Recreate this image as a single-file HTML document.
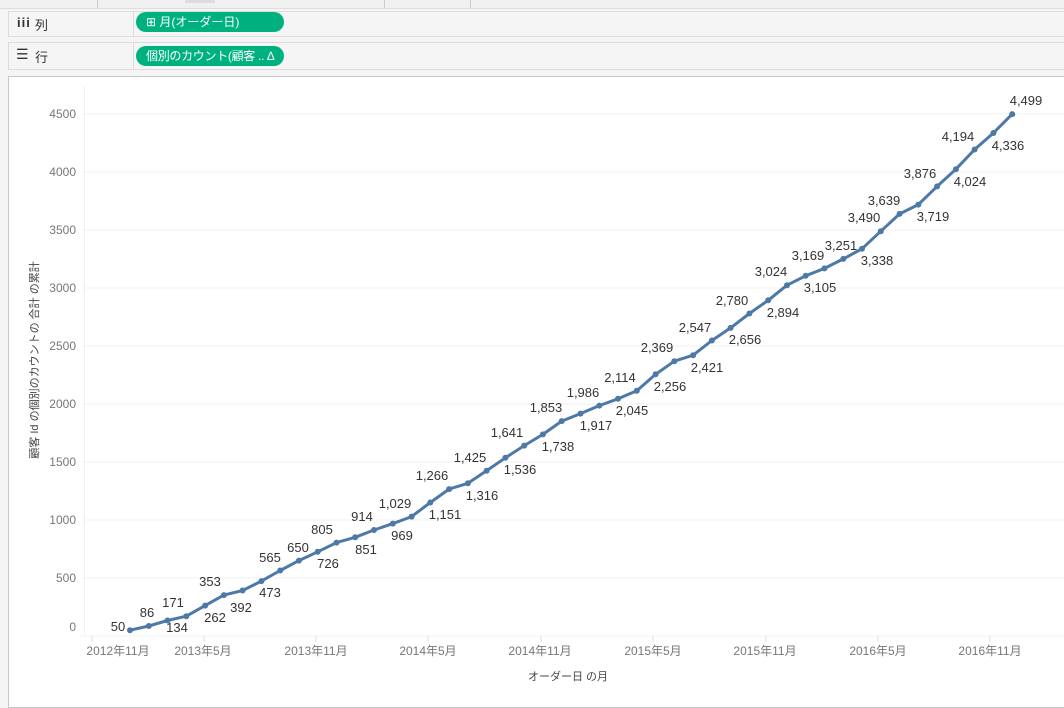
<!DOCTYPE html>
<html><head><meta charset="utf-8"><style>
body{margin:0;width:1064px;height:699px;background:#f5f5f5;overflow:hidden;position:relative;font-family:"Liberation Sans","Noto Sans CJK JP",sans-serif}
.row{position:absolute;left:8px;right:0;background:#f5f5f5;border:1px solid #dcdcdc;border-right:none}
.lab{position:absolute;left:0;top:0;bottom:0;width:124px;border-right:1px solid #dcdcdc;font-size:13px;color:#333}
.pill{position:absolute;left:136px;height:20px;width:148px;border-radius:10px;background:#00b180;color:#fff;font-size:12px;line-height:20px;white-space:nowrap;overflow:hidden}
</style></head><body>
<div style="position:absolute;left:0;top:0;width:1064px;height:8px;background:#f0f0f0;border-bottom:1px solid #ddd"></div>
<div style="position:absolute;left:97px;top:0;width:1px;height:8px;background:#ccc"></div>
<div style="position:absolute;left:185px;top:0;width:30px;height:3px;background:#ddd"></div>
<div style="position:absolute;left:384px;top:0;width:1px;height:8px;background:#ccc"></div>
<div style="position:absolute;left:470px;top:0;width:1px;height:8px;background:#ccc"></div>
<div class="row" style="top:11px;height:24px"><div class="lab"><span style="position:absolute;left:8px;top:3px;font-weight:bold;letter-spacing:1px">iii</span><span style="position:absolute;left:26px;top:3px">列</span></div></div>
<div class="pill" style="top:12px"><span style="margin-left:10px">⊞ 月(オーダー日)</span></div>
<div class="row" style="top:42px;height:26px"><div class="lab"><span style="position:absolute;left:7px;top:3px;font-size:14px">☰</span><span style="position:absolute;left:26px;top:4px">行</span></div></div>
<div class="pill" style="top:46px"><span style="margin-left:10px;letter-spacing:-0.3px">個別のカウント(顧客 .. ∆</span></div>
<div style="position:absolute;left:8px;top:76px;width:1060px;height:630px;background:#fff;border:1px solid #c8c8c8"></div>
<svg width="1064" height="699" style="position:absolute;left:0;top:0" font-family="Liberation Sans, Noto Sans CJK JP, sans-serif">
<g stroke="#f0f0f0" stroke-width="1">
<line x1="84" y1="114" x2="1064" y2="114"/><line x1="84" y1="172" x2="1064" y2="172"/><line x1="84" y1="230" x2="1064" y2="230"/><line x1="84" y1="288" x2="1064" y2="288"/><line x1="84" y1="346" x2="1064" y2="346"/><line x1="84" y1="404" x2="1064" y2="404"/><line x1="84" y1="462" x2="1064" y2="462"/><line x1="84" y1="520" x2="1064" y2="520"/><line x1="84" y1="578" x2="1064" y2="578"/><line x1="80" y1="636" x2="1064" y2="636"/>
<line x1="84.5" y1="86" x2="84.5" y2="636"/>
</g>
<g stroke="#ddd"><line x1="92" y1="636" x2="92" y2="642"/><line x1="204" y1="636" x2="204" y2="642"/><line x1="316" y1="636" x2="316" y2="642"/><line x1="428" y1="636" x2="428" y2="642"/><line x1="541" y1="636" x2="541" y2="642"/><line x1="653" y1="636" x2="653" y2="642"/><line x1="766" y1="636" x2="766" y2="642"/><line x1="878" y1="636" x2="878" y2="642"/><line x1="990" y1="636" x2="990" y2="642"/></g>
<g font-size="12" fill="#777" text-anchor="end">
<text x="76" y="118">4500</text><text x="76" y="176">4000</text><text x="76" y="234">3500</text><text x="76" y="292">3000</text><text x="76" y="350">2500</text><text x="76" y="408">2000</text><text x="76" y="466">1500</text><text x="76" y="524">1000</text><text x="76" y="582">500</text><text x="76" y="631">0</text>
</g>
<g font-size="12" fill="#777" text-anchor="middle">
<text x="118" y="655">2012年11月</text><text x="203" y="655">2013年5月</text><text x="316" y="655">2013年11月</text><text x="428" y="655">2014年5月</text><text x="540" y="655">2014年11月</text><text x="653" y="655">2015年5月</text><text x="765" y="655">2015年11月</text><text x="878" y="655">2016年5月</text><text x="990" y="655">2016年11月</text>
<text x="568" y="680" font-size="11" fill="#444">オーダー日 の月</text>
<text transform="translate(38,360) rotate(-90)" font-size="11" fill="#444">顧客 Id の個別のカウントの 合計 の累計</text>
</g>
<polyline fill="none" stroke="#4e79a7" stroke-width="3" stroke-linejoin="round" points="130,630.2 148.8,626 167.5,620.5 186.3,616.2 205.1,605.6 223.9,595.1 242.6,590.5 261.4,581.1 280.2,570.5 298.9,560.6 317.7,551.8 336.5,542.6 355.2,537.3 374,530 392.8,523.6 411.6,516.6 430.3,502.5 449.1,489.1 467.9,483.3 486.6,470.7 505.4,457.8 524.2,445.6 542.9,434.4 561.7,421.1 580.5,413.6 599.3,405.6 618,398.8 636.8,390.8 655.6,374.3 674.3,361.2 693.1,355.2 711.9,340.5 730.6,327.9 749.4,313.5 768.2,300.3 787,285.2 805.7,275.8 824.5,268.4 843.3,258.9 862,248.8 880.8,231.2 899.6,213.9 918.3,204.6 937.1,186.4 955.9,169.2 974.6,149.5 993.4,133 1012.2,114.1"/>
<g fill="#4e79a7">
<circle cx="130" cy="630.2" r="3"/><circle cx="148.8" cy="626" r="3"/><circle cx="167.5" cy="620.5" r="3"/><circle cx="186.3" cy="616.2" r="3"/><circle cx="205.1" cy="605.6" r="3"/><circle cx="223.9" cy="595.1" r="3"/><circle cx="242.6" cy="590.5" r="3"/><circle cx="261.4" cy="581.1" r="3"/><circle cx="280.2" cy="570.5" r="3"/><circle cx="298.9" cy="560.6" r="3"/><circle cx="317.7" cy="551.8" r="3"/><circle cx="336.5" cy="542.6" r="3"/><circle cx="355.2" cy="537.3" r="3"/><circle cx="374" cy="530" r="3"/><circle cx="392.8" cy="523.6" r="3"/><circle cx="411.6" cy="516.6" r="3"/><circle cx="430.3" cy="502.5" r="3"/><circle cx="449.1" cy="489.1" r="3"/><circle cx="467.9" cy="483.3" r="3"/><circle cx="486.6" cy="470.7" r="3"/><circle cx="505.4" cy="457.8" r="3"/><circle cx="524.2" cy="445.6" r="3"/><circle cx="542.9" cy="434.4" r="3"/><circle cx="561.7" cy="421.1" r="3"/><circle cx="580.5" cy="413.6" r="3"/><circle cx="599.3" cy="405.6" r="3"/><circle cx="618" cy="398.8" r="3"/><circle cx="636.8" cy="390.8" r="3"/><circle cx="655.6" cy="374.3" r="3"/><circle cx="674.3" cy="361.2" r="3"/><circle cx="693.1" cy="355.2" r="3"/><circle cx="711.9" cy="340.5" r="3"/><circle cx="730.6" cy="327.9" r="3"/><circle cx="749.4" cy="313.5" r="3"/><circle cx="768.2" cy="300.3" r="3"/><circle cx="787" cy="285.2" r="3"/><circle cx="805.7" cy="275.8" r="3"/><circle cx="824.5" cy="268.4" r="3"/><circle cx="843.3" cy="258.9" r="3"/><circle cx="862" cy="248.8" r="3"/><circle cx="880.8" cy="231.2" r="3"/><circle cx="899.6" cy="213.9" r="3"/><circle cx="918.3" cy="204.6" r="3"/><circle cx="937.1" cy="186.4" r="3"/><circle cx="955.9" cy="169.2" r="3"/><circle cx="974.6" cy="149.5" r="3"/><circle cx="993.4" cy="133" r="3"/><circle cx="1012.2" cy="114.1" r="3"/>
</g>
<g font-size="13" fill="#333" text-anchor="middle">
<text x="118" y="631">50</text>
<text x="147" y="617">86</text><text x="177" y="632">134</text><text x="173" y="607">171</text><text x="215" y="622">262</text><text x="210" y="586">353</text><text x="241" y="612">392</text><text x="270" y="597">473</text>
<text x="270" y="562">565</text><text x="298" y="552">650</text><text x="328" y="568">726</text><text x="322" y="534">805</text><text x="366" y="554">851</text><text x="362" y="521">914</text><text x="402" y="540">969</text><text x="395" y="508">1,029</text><text x="445" y="519">1,151</text><text x="432" y="480">1,266</text><text x="482" y="500">1,316</text><text x="470" y="462">1,425</text><text x="520" y="474">1,536</text><text x="507" y="437">1,641</text><text x="558" y="451">1,738</text><text x="546" y="412">1,853</text><text x="596" y="430">1,917</text><text x="583" y="397">1,986</text><text x="632" y="415">2,045</text><text x="620" y="382">2,114</text><text x="670" y="391">2,256</text><text x="657" y="352">2,369</text><text x="707" y="372">2,421</text><text x="695" y="332">2,547</text><text x="745" y="344">2,656</text><text x="732" y="305">2,780</text><text x="783" y="317">2,894</text><text x="771" y="276">3,024</text><text x="820" y="292">3,105</text><text x="808" y="260">3,169</text><text x="841" y="250">3,251</text><text x="877" y="265">3,338</text><text x="864" y="222">3,490</text><text x="884" y="205">3,639</text><text x="933" y="221">3,719</text><text x="920" y="178">3,876</text><text x="970" y="186">4,024</text><text x="958" y="141">4,194</text><text x="1008" y="150">4,336</text><text x="1026" y="105">4,499</text>
</g>
</svg>
</body></html>
